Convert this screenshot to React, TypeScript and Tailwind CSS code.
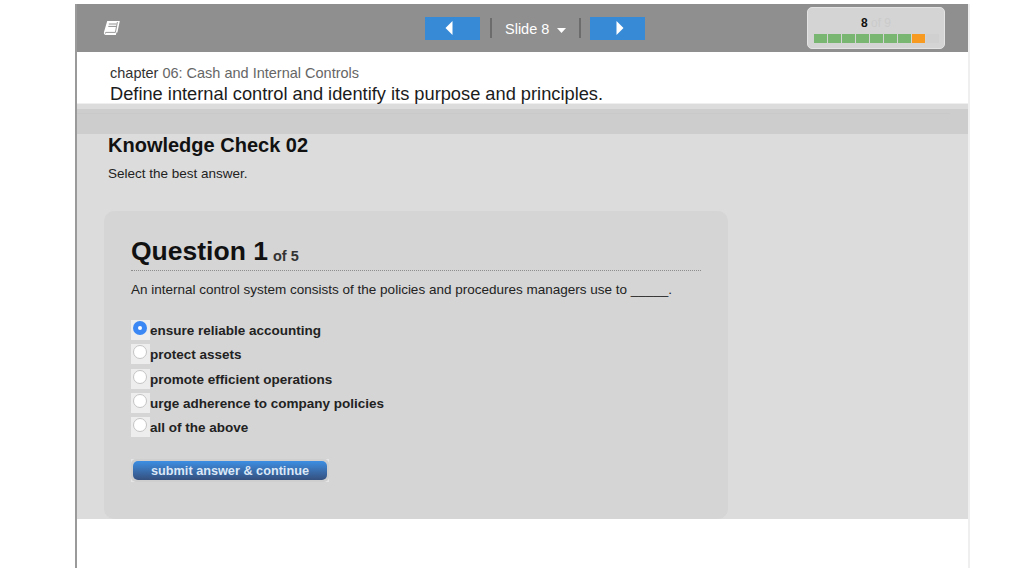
const options = [
  'ensure reliable accounting',
  'protect assets',
  'promote efficient operations',
  'urge adherence to company policies',
  'all of the above',
];

function BookIcon() {
  return (
    <svg width="18" height="16" viewBox="0 0 18 16" className="block">
      <path d="M4.2 1 H16.8 L14.4 12.6 L13.4 12.6 L12.9 15 H3 C1.2 15 0.6 13.6 1 12 Z" fill="#fff" />
      <path d="M5.8 4 H13.6 M5.3 6.4 H13.1" stroke="#8f8f8f" strokeWidth="1" />
      <path d="M14.4 2 L12.4 12.4 H3 C2.2 12.4 2 13.2 2.6 13.6" stroke="#8f8f8f" strokeWidth="0.9" fill="none" />
    </svg>
  );
}

function Arrow({ left }: { left?: boolean }) {
  return (
    <button className={left ? 'flex h-[23px] w-[55px] items-center justify-center bg-[#378ad6] pr-[7px]' : 'flex h-[23px] w-[55px] items-center justify-center bg-[#378ad6] pl-[4px]'}>
      <svg width="8" height="14" viewBox="0 0 8 14">
        <path d={left ? 'M7.5 0 V14 L0.5 7 Z' : 'M0.5 0 V14 L7.5 7 Z'} fill="#fff" />
      </svg>
    </button>
  );
}

function Progress() {
  return (
    <div className="absolute left-[730px] top-[3px] flex h-[42px] w-[138px] flex-col items-center rounded-[5px] border border-[#e4e4e4] bg-[#d4d4d4] pt-[8px]">
      <div className="text-[12px] leading-[14px] text-[#cbcbcb]">
        <span className="font-bold text-[#111]">8</span> of 9
      </div>
      <div className="mt-[4px] flex gap-[1px]">
        {[0, 1, 2, 3, 4, 5, 6, 7, 8].map((i) => (
          <div
            key={i}
            className={
              i < 7
                ? 'h-[9px] w-[13px] bg-[#78b672]'
                : i === 7
                  ? 'h-[9px] w-[13px] bg-[#f79a22]'
                  : 'h-[9px] w-[13px] bg-[#d0d0d0]'
            }
          />
        ))}
      </div>
    </div>
  );
}

export default function App() {
  return (
    <div className="h-[568px] w-[1024px] overflow-hidden bg-white pt-[4px] font-['Liberation_Sans',Arial,sans-serif]">
      <div className="relative ml-[75px] h-[564px] w-[895px] border-l-2 border-r-2 border-l-[#9a9a9a] border-r-[#efefef]">
        {/* top bar */}
        <div className="relative flex h-[48px] items-center bg-[#8f8f8f] pl-[26px]">
          <BookIcon />
          <div className="ml-[304px] flex items-center">
            <Arrow left />
            <div className="ml-[10px] h-[20px] w-[2px] bg-[#6c6c6c]" />
            <div className="ml-[13px] mt-[3px] flex w-[74px] items-center text-[14.5px] text-white">
              Slide 8
              <svg width="9" height="5" viewBox="0 0 9 5" className="ml-[8px] mt-[2px]">
                <path d="M0 0 H9 L4.5 5 Z" fill="#fff" />
              </svg>
            </div>
            <div className="h-[20px] w-[2px] bg-[#6c6c6c]" />
            <div className="ml-[9px]">
              <Arrow />
            </div>
          </div>
          <Progress />
        </div>

        {/* chapter heading */}
        <div className="h-[51px] pl-[33px] pt-[13px]">
          <div className="text-[14.5px] leading-[16px] text-[#666]">
            <span className="text-[#333]">chapter</span> 06: Cash and Internal Controls
          </div>
          <div className="mt-[2px] text-[18.25px] leading-[21px] text-[#1c1c1c]">
            Define internal control and identify its purpose and principles.
          </div>
        </div>

        {/* content */}
        <div className="h-[416px] border-t border-[#efefef] bg-[#dcdcdc] pt-[5px]">
          <div className="h-[25px] bg-[#cdcdcd] pt-[4px]">
            <div className="h-[1px] w-[873px] bg-[#c9c9c9]" />
          </div>
          <h1 className="ml-[31px] text-[20px] font-bold leading-[22px] text-[#111]">Knowledge Check 02</h1>
          <p className="ml-[31px] mt-[10px] text-[13.5px] leading-[16px] text-[#222]">Select the best answer.</p>

          <div className="ml-[27px] mt-[29px] h-[308px] w-[624px] rounded-[10px] bg-[#d5d5d5] px-[27px] pt-[25px]">
            <div className="flex h-[35px] items-end border-b border-dotted border-[#8d8d8d] pb-[2px]">
              <span className="text-[26.5px] font-bold leading-[34px] text-[#111]">Question 1</span>
              <span className="mb-[4px] ml-[5px] text-[14.5px] font-bold leading-[16px] text-[#333]">of 5</span>
            </div>
            <p className="mt-[11px] text-[13.5px] leading-[16px] text-[#222]">
              An internal control system consists of the policies and procedures managers use to _____.
            </p>
            <div className="mt-[22px] flex flex-col gap-[4.3px]">
              {options.map((text, i) => (
                <label key={text} className="flex h-[20px] items-start">
                  <span className="flex h-[20px] w-[19px] shrink-0 justify-start bg-[#ededed] pl-[2px] pt-[1px]">
                    {i === 0 ? (
                      <span className="flex h-[14px] w-[14px] items-center justify-center rounded-full bg-[#3b88f5]">
                        <span className="h-[4px] w-[4px] rounded-full bg-white" />
                      </span>
                    ) : (
                      <span className="h-[14px] w-[14px] rounded-full border border-[#c4c4c4] bg-white" />
                    )}
                  </span>
                  <span className="mt-[3px] text-[13.5px] font-bold leading-[16px] text-[#222]">{text}</span>
                </label>
              ))}
            </div>
            <div className="mt-[22px] h-[23px] w-[198px] bg-[#e6e6e6]">
              <div className="h-[23px] w-[198px] rounded-[5px] bg-[#cfcfcf] p-[2px]">
                <button className="block h-[19px] w-full rounded-[5px] bg-gradient-to-b from-[#3c8fe4] to-[#34507e] text-[12.7px] font-bold leading-[18px] text-[#dbe8f7]">
                  submit answer &amp; continue
                </button>
              </div>
            </div>
          </div>
        </div>
      </div>
    </div>
  );
}
